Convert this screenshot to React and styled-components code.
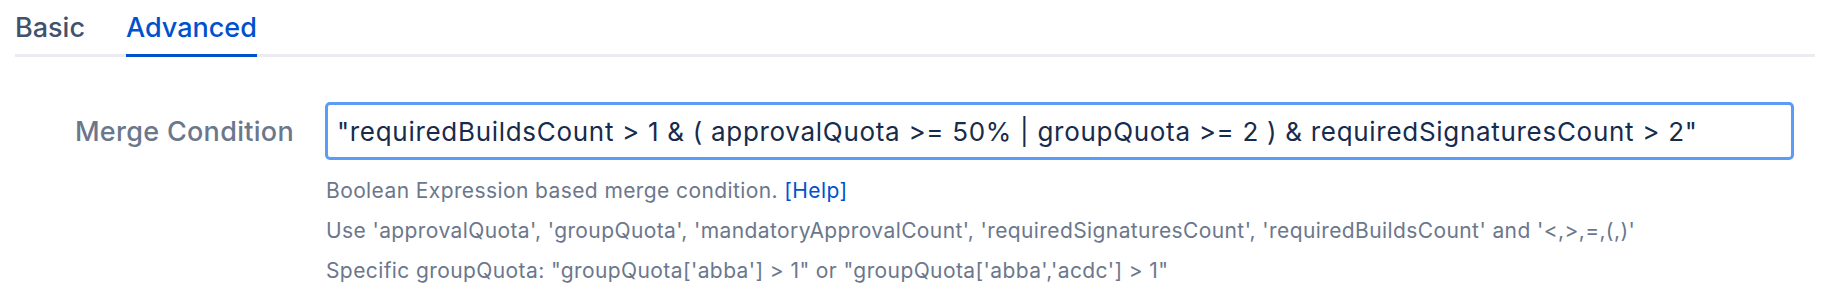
import React from "react";
import styled, { createGlobalStyle } from "styled-components";

const GlobalStyle = createGlobalStyle`
  body {
    margin: 0;
    background: #ffffff;
    font-family: Inter, "Noto Sans", "Liberation Sans", sans-serif;
  }
`;

const Page = styled.div`
  padding: 0 9px 0 15px;
`;

const TabList = styled.div`
  display: flex;
  gap: 41px;
  border-bottom: 3px solid #ebecf0;
`;

const Tab = styled.div`
  position: relative;
  padding: 11px 0 9px;
  font-size: 27px;
  line-height: 34px;
  font-weight: 500;
  color: ${(p) => (p.active ? "#0052cc" : "#42526e")};

  &::after {
    content: "";
    position: absolute;
    left: 0;
    right: 0;
    bottom: -3px;
    height: 3px;
    background: ${(p) => (p.active ? "#0052cc" : "transparent")};
  }
`;

const FieldRow = styled.div`
  display: grid;
  grid-template-columns: 279px 1fr;
  column-gap: 31px;
  align-items: center;
  margin-top: 45px;
  padding-right: 21px;
`;

const Label = styled.label`
  text-align: right;
  font-size: 27px;
  letter-spacing: 0.3px;
  font-weight: 500;
  color: #6b778c;
`;

const Input = styled.input`
  box-sizing: border-box;
  width: 100%;
  height: 58px;
  padding: 0 9px;
  border: 3px solid #5c9bf6;
  border-radius: 5px;
  outline: none;
  font-family: inherit;
  font-size: 26px;
  letter-spacing: 0.7px;
  color: #172b4d;
  background: #ffffff;
`;

const HelpBlock = styled.div`
  margin: 11px 0 0 311px;
`;

const HelpLine = styled.div`
  font-size: 21px;
  letter-spacing: 0.4px;
  line-height: 40px;
  color: #6b778c;
  white-space: nowrap;
`;

const HelpLink = styled.a`
  color: #0052cc;
  text-decoration: none;
`;

const condition =
  '"requiredBuildsCount > 1 & ( approvalQuota >= 50% | groupQuota >= 2 ) & requiredSignaturesCount > 2"';

export default function App() {
  return (
    <Page>
      <GlobalStyle />
      <TabList>
        <Tab>Basic</Tab>
        <Tab active>Advanced</Tab>
      </TabList>
      <FieldRow>
        <Label htmlFor="merge-condition">Merge Condition</Label>
        <Input id="merge-condition" defaultValue={condition} />
      </FieldRow>
      <HelpBlock>
        <HelpLine>
          Boolean Expression based merge condition. <HelpLink href="#">[Help]</HelpLink>
        </HelpLine>
        <HelpLine>
          Use 'approvalQuota', 'groupQuota', 'mandatoryApprovalCount', 'requiredSignaturesCount',
          'requiredBuildsCount' and '&lt;,&gt;,=,(,)'
        </HelpLine>
        <HelpLine>
          Specific groupQuota: "groupQuota['abba'] &gt; 1" or "groupQuota['abba','acdc'] &gt; 1"
        </HelpLine>
      </HelpBlock>
    </Page>
  );
}
